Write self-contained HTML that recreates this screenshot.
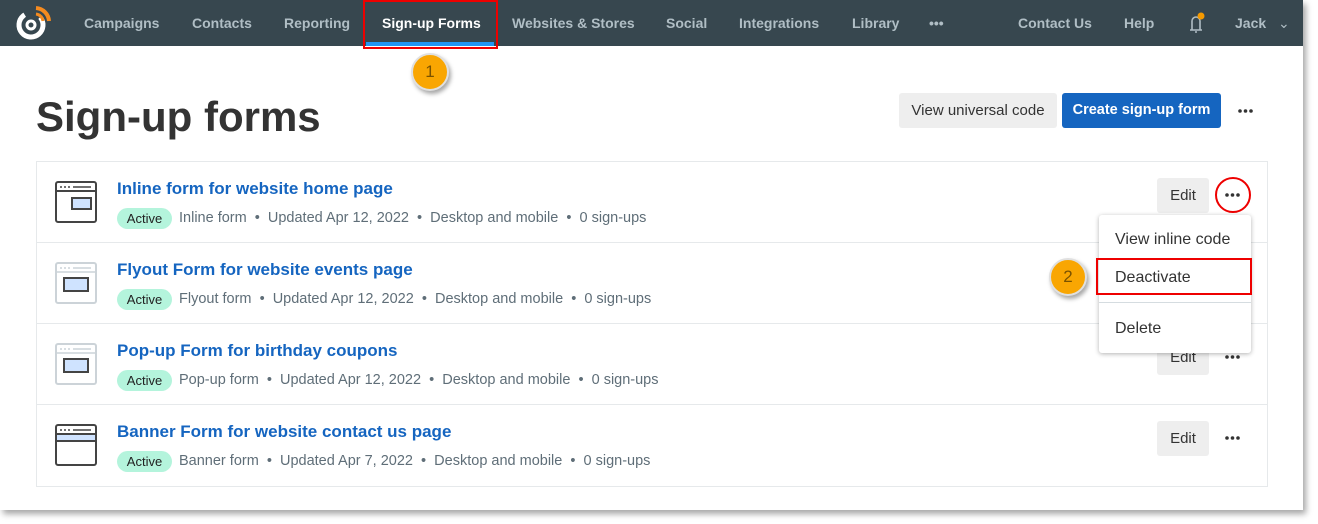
<!DOCTYPE html><html><head><style>
*{box-sizing:border-box;margin:0;padding:0}
body{width:1318px;height:524px;background:#fff;font-family:"Liberation Sans",Arial,sans-serif;position:relative;overflow:hidden}
.page{position:absolute;left:0;top:0;width:1303px;height:510px;background:#fff;box-shadow:3px 4px 6px rgba(0,0,0,.35)}
.nav{position:absolute;left:0;top:0;width:1303px;height:46px;background:#37474f}
.nav span{position:absolute;top:15px;font-size:14px;color:#b0bec5;font-weight:bold}
.a{position:absolute}
.title{left:36px;top:93px;font-size:42px;font-weight:bold;color:#333}
.btn{position:absolute;height:35px;line-height:35px;border-radius:3px;font-size:15px;text-align:center}
.list{position:absolute;left:36px;top:161px;width:1232px;height:326px;border:1px solid #e6e9eb}
.row{position:absolute;left:0;width:1230px;height:81px;border-bottom:1px solid #e6e9eb}
.row h3{position:absolute;left:80px;top:17px;font-size:17px;color:#1565c0;font-weight:bold}
.badge{position:absolute;left:80px;top:46px;width:55px;height:21px;border-radius:11px;background:#b4f4dc;font-size:13px;color:#222;text-align:center;line-height:21px}
.meta{position:absolute;left:142px;top:48px;font-size:14.5px;color:#5f6e78}
.ic{position:absolute;left:18px;top:19px}
.edit{position:absolute;left:1120px;top:16px;width:52px;height:35px;background:#eee;border-radius:3px;font-size:15px;color:#333;text-align:center;line-height:35px}
.dots{position:absolute;left:1188px;top:31px}
.circ{position:absolute;width:38px;height:38px;border-radius:50%;background:#f9a602;border:2px solid #e0e0e0;box-shadow:2px 3px 4px rgba(0,0,0,.35);color:#7a5200;font-size:17px;text-align:center;line-height:34px}
</style></head><body><div class="page">
<div class="nav">
<svg style="position:absolute;left:14px;top:4px" width="38" height="38" viewBox="0 0 38 38"><circle cx="17" cy="21" r="12" fill="none" stroke="#fff" stroke-width="5" stroke-dasharray="58 18" transform="rotate(-40 17 21)"/><circle cx="17" cy="21" r="4" fill="none" stroke="#fff" stroke-width="3"/><path d="M22 4a14 14 0 0 1 13 13" stroke="#f58b1f" stroke-width="4" fill="none"/><path d="M22 10a8 8 0 0 1 7 7" stroke="#f58b1f" stroke-width="3" fill="none"/></svg>
<span style="left:84px">Campaigns</span><span style="left:192px">Contacts</span><span style="left:284px">Reporting</span><span style="left:382px;color:#fff">Sign-up Forms</span><span style="left:512px">Websites &amp; Stores</span><span style="left:666px">Social</span><span style="left:739px">Integrations</span><span style="left:852px">Library</span><span style="left:929px">•••</span><span style="left:1018px">Contact Us</span><span style="left:1124px">Help</span><span style="left:1235px">Jack</span><span style="left:1278px;font-weight:normal">⌄</span>
<svg style="position:absolute;left:1186px;top:12px" width="20" height="22"><path d="M4 18h12M6 18V9a4 4 0 0 1 8 0v9M9 20h2" stroke="#b0bec5" stroke-width="1.6" fill="none"/><circle cx="15" cy="4" r="3.5" fill="#f59a00"/></svg>
<div class="a" style="left:366px;top:42px;width:128px;height:4px;background:#2196f3"></div>
</div>
<div class="a" style="left:363px;top:0;width:135px;height:49px;border:2px solid #e00"></div>
<div class="circ" style="left:411px;top:53px">1</div>
<div class="a title">Sign-up forms</div>
<div class="btn" style="left:899px;top:93px;width:158px;background:#eee;color:#333">View universal code</div>
<div class="btn" style="left:1062px;top:93px;width:159px;background:#1565c0;color:#fff;font-weight:bold;font-size:14.5px">Create sign-up form</div>
<svg class="a" style="left:1238px;top:109px" width="16" height="4"><circle cx="2" cy="2" r="1.8" fill="#333"/><circle cx="7.5" cy="2" r="1.8" fill="#333"/><circle cx="13" cy="2" r="1.8" fill="#333"/></svg>
<div class="list">
<div class="row" style="top:0"><svg class="ic" width="44" height="44"><rect x="1" y="1" width="40" height="40" rx="2" fill="#fff" stroke="#444" stroke-width="2"/><line x1="1" y1="10" x2="41" y2="10" stroke="#444" stroke-width="2"/><path d="M5 6h2M9 6h2M13 6h2M18 6h18" stroke="#444" stroke-width="1.5"/><rect x="17" y="17" width="19" height="11" fill="#cfe3ff" stroke="#444" stroke-width="2"/></svg><h3>Inline form for website home page</h3><div class="badge">Active</div><div class="meta">Inline form &nbsp;•&nbsp; Updated Apr 12, 2022 &nbsp;•&nbsp; Desktop and mobile &nbsp;•&nbsp; 0 sign-ups</div><div class="edit">Edit</div><svg class="dots" width="16" height="4"><circle cx="2" cy="2" r="1.8" fill="#333"/><circle cx="7.5" cy="2" r="1.8" fill="#333"/><circle cx="13" cy="2" r="1.8" fill="#333"/></svg></div>
<div class="row" style="top:81px"><svg class="ic" width="44" height="44"><rect x="1" y="1" width="40" height="40" rx="2" fill="#fff" stroke="#ccd3d8" stroke-width="2"/><line x1="1" y1="10" x2="41" y2="10" stroke="#ccd3d8" stroke-width="1.5"/><path d="M5 6h2M9 6h2M13 6h2M18 6h18" stroke="#ccd3d8" stroke-width="1.5"/><rect x="9" y="16" width="24" height="13" fill="#cfe3ff" stroke="#444" stroke-width="2"/></svg><h3>Flyout Form for website events page</h3><div class="badge">Active</div><div class="meta">Flyout form &nbsp;•&nbsp; Updated Apr 12, 2022 &nbsp;•&nbsp; Desktop and mobile &nbsp;•&nbsp; 0 sign-ups</div></div>
<div class="row" style="top:162px"><svg class="ic" width="44" height="44"><rect x="1" y="1" width="40" height="40" rx="2" fill="#fff" stroke="#ccd3d8" stroke-width="2"/><line x1="1" y1="10" x2="41" y2="10" stroke="#ccd3d8" stroke-width="1.5"/><path d="M5 6h2M9 6h2M13 6h2M18 6h18" stroke="#ccd3d8" stroke-width="1.5"/><rect x="9" y="16" width="24" height="13" fill="#cfe3ff" stroke="#444" stroke-width="2"/></svg><h3>Pop-up Form for birthday coupons</h3><div class="badge">Active</div><div class="meta">Pop-up form &nbsp;•&nbsp; Updated Apr 12, 2022 &nbsp;•&nbsp; Desktop and mobile &nbsp;•&nbsp; 0 sign-ups</div><div class="edit">Edit</div><svg class="dots" width="16" height="4"><circle cx="2" cy="2" r="1.8" fill="#333"/><circle cx="7.5" cy="2" r="1.8" fill="#333"/><circle cx="13" cy="2" r="1.8" fill="#333"/></svg></div>
<div class="row" style="top:243px;border:none"><svg class="ic" width="44" height="44"><rect x="1" y="1" width="40" height="40" rx="2" fill="#fff" stroke="#444" stroke-width="2"/><rect x="1" y="10" width="40" height="7" fill="#cfe3ff" stroke="#444" stroke-width="2"/><path d="M5 6h2M9 6h2M13 6h2M18 6h18" stroke="#444" stroke-width="1.5"/></svg><h3>Banner Form for website contact us page</h3><div class="badge">Active</div><div class="meta">Banner form &nbsp;•&nbsp; Updated Apr 7, 2022 &nbsp;•&nbsp; Desktop and mobile &nbsp;•&nbsp; 0 sign-ups</div><div class="edit">Edit</div><svg class="dots" width="16" height="4"><circle cx="2" cy="2" r="1.8" fill="#333"/><circle cx="7.5" cy="2" r="1.8" fill="#333"/><circle cx="13" cy="2" r="1.8" fill="#333"/></svg></div>
</div>
<div class="a" style="left:1215px;top:177px;width:36px;height:36px;border:2px solid #e00;border-radius:50%"></div>
<div class="a" style="left:1099px;top:215px;width:152px;height:138px;background:#fff;border-radius:3px;box-shadow:0 1px 5px rgba(0,0,0,.3);font-size:16px;color:#333">
<div class="a" style="left:16px;top:16px">View inline code</div>
<div class="a" style="left:16px;top:54px">Deactivate</div>
<div class="a" style="left:0;top:87px;width:152px;height:1px;background:#d5dce0"></div>
<div class="a" style="left:16px;top:105px">Delete</div></div>
<div class="a" style="left:1096px;top:258px;width:156px;height:37px;border:2px solid #e00"></div>
<div class="circ" style="left:1049px;top:258px">2</div>
</div></body></html>
